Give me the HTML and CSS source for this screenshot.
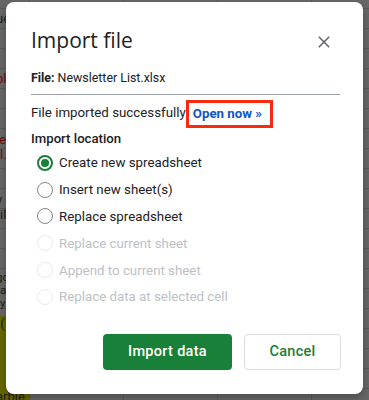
FILE: index.html
```html
<!DOCTYPE html>
<html lang="en">
<head>
<meta charset="utf-8">
<title>Import file</title>
<link rel="stylesheet" href="styles.css">
</head>
<body>
<div class="sheet">
  <div class="strip">
    <div class="blk b20 dark">ue</div>
    <div class="blk b40"></div>
    <div class="blk b20 red pad">bl</div>
    <div class="blk b40"></div>
    <div class="blk b40 red two">le<br>l.:</div>
    <div class="blk b20"></div>
    <div class="blk b40 dark two">y<br>il</div>
    <div class="blk b40"></div>
    <div class="blk b48 dark three">go<br>ar<br>y</div>
    <div class="blk yellow dark">
      <span>t(</span>
      <span>arble</span>
    </div>
  </div>
</div>

<div class="dialog" role="dialog" aria-labelledby="dlg-title">
  <div class="header">
    <h1 id="dlg-title" class="title">Import file</h1>
    <button class="close" aria-label="Close">
      <svg width="12" height="12" viewBox="0 0 12 12"><path d="M0.8 0.8 L11.2 11.2 M11.2 0.8 L0.8 11.2" stroke="#5f6368" stroke-width="1.5" fill="none"/></svg>
    </button>
  </div>
  <div class="file"><b>File:</b> Newsletter List.xlsx</div>
  <div class="status">File imported successfully<span class="mark"><a class="open" href="#">Open now »</a></span></div>
  <div class="loc-title">Import location</div>
  <div class="options">
    <label class="opt"><span class="radio checked"></span>Create new spreadsheet</label>
    <label class="opt"><span class="radio"></span>Insert new sheet(s)</label>
    <label class="opt"><span class="radio"></span>Replace spreadsheet</label>
    <label class="opt disabled"><span class="radio"></span>Replace current sheet</label>
    <label class="opt disabled"><span class="radio"></span>Append to current sheet</label>
    <label class="opt disabled"><span class="radio"></span>Replace data at selected cell</label>
  </div>
  <div class="actions">
    <button class="btn primary">Import data</button>
    <button class="btn secondary">Cancel</button>
  </div>
</div>
</body>
</html>
```

FILE: styles.css
```css
html, body {
  margin: 0;
  padding: 0;
}
body {
  width: 369px;
  height: 400px;
  overflow: hidden;
  position: relative;
  font-family: Roboto, "Liberation Sans", Arial, sans-serif;
  background: #676767;
}
.sheet {
  width: 369px;
  height: 400px;
  background-color: #676767;
  background-image:
    linear-gradient(to right, #585858 1px, transparent 1px),
    linear-gradient(to bottom, #585858 1px, transparent 1px);
  background-size: 94px 100%, 100% 20px;
  background-position: 29px 0, 0 8px;
}
.strip {
  width: 29px;
  height: 400px;
  overflow: hidden;
  display: flex;
  flex-direction: column;
  padding-top: 8px;
  box-sizing: border-box;
  font-size: 13px;
  line-height: 14px;
}
.blk {
  flex: none;
  box-sizing: border-box;
  white-space: nowrap;
  text-indent: -4px;
}
.b20 { height: 20px; padding-top: 4px; }
.b40 { height: 40px; }
.b48 { height: 48px; padding-top: 3px; }
.two { padding-top: 4px; line-height: 15px; }
.three { font-size: 11.5px; line-height: 13px; }
.dark { color: #1d1d1d; }
.red { color: #6e0b0b; }
.yellow {
  flex: 1;
  background: #676700;
  display: flex;
  flex-direction: column;
  justify-content: space-between;
  padding-top: 1px;
  margin-bottom: -4px;
}

.dialog {
  position: absolute;
  left: 6px;
  top: 2px;
  width: 357px;
  height: 392px;
  box-sizing: border-box;
  padding: 24px 23px 0 25px;
  background: #fff;
  border-radius: 8px;
  box-shadow: 0 4px 8px rgba(0,0,0,0.25);
  color: #202124;
  display: flex;
  flex-direction: column;
}
.header {
  display: flex;
  align-items: center;
  justify-content: space-between;
  height: 28px;
}
.title {
  margin: 0;
  font-family: "Open Sans", Roboto, sans-serif;
  font-weight: 400;
  font-size: 21px;
  line-height: 28px;
  color: #202124;
}
.close {
  border: 0;
  background: none;
  padding: 0;
  margin-right: 10px;
  margin-top: 3px;
  width: 12px;
  height: 12px;
  display: flex;
}
.file {
  margin-top: 14px;
  font-size: 12.4px;
  line-height: 20px;
  padding-bottom: 6px;
  border-bottom: 1px solid #9aa0a6;
  color: #202124;
}
.file b { font-weight: 700; }
.status {
  margin-top: 8px;
  font-size: 13.3px;
  line-height: 20px;
  color: #202124;
  height: 20px;
  white-space: nowrap;
}
.mark {
  display: inline-block;
  vertical-align: top;
  margin-top: -3px;
  border: 3px solid #fb2a0c;
  padding: 1px 8px 1px 4px;
  line-height: 20px;
  margin-left: 0;
}
.open {
  color: #1155cc;
  font-weight: 700;
  text-decoration: none;
}
.loc-title {
  margin-top: 7px;
  font-size: 13.2px;
  line-height: 18px;
  font-weight: 500;
  color: #202124;
}
.options {
  display: flex;
  flex-direction: column;
  padding-top: 1.5px;
}
.opt {
  height: 26.8px;
  display: flex;
  align-items: center;
  gap: 6px;
  padding-left: 6px;
  font-size: 13.3px;
  color: #202124;
}
.radio {
  width: 16px;
  height: 16px;
  box-sizing: border-box;
  border-radius: 50%;
  border: 1px solid #80868b;
  position: relative;
  flex: none;
}
.radio.checked {
  border: 2px solid #188038;
}
.radio.checked::after {
  content: "";
  position: absolute;
  left: 2px;
  top: 2px;
  width: 8px;
  height: 8px;
  border-radius: 50%;
  background: #188038;
}
.opt.disabled { color: #bdc1c6; }
.opt.disabled .radio { border-color: #e8eaed; }
.actions {
  margin-top: 23.5px;
  display: flex;
  justify-content: flex-end;
  gap: 12px;
  margin-right: -1px;
}
.btn {
  height: 36px;
  border-radius: 4px;
  font-family: Roboto, "Liberation Sans", sans-serif;
  font-size: 14.5px;
  font-weight: 500;
  letter-spacing: 0.3px;
  padding: 0;
}
.primary {
  width: 129px;
  background: #188038;
  color: #fff;
  border: 0;
}
.secondary {
  width: 97px;
  background: #fff;
  color: #188038;
  border: 1px solid #dadce0;
}
```
